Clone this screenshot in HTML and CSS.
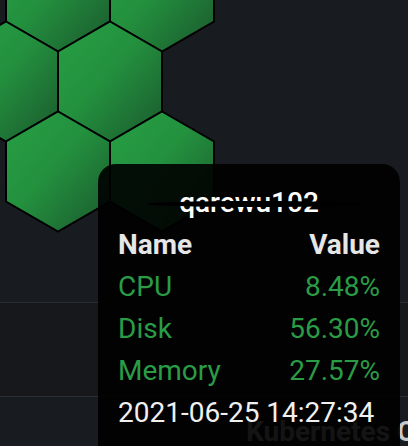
FILE: index.html
```html
<!DOCTYPE html>
<html>
<head>
<meta charset="utf-8">
<link rel="stylesheet" href="styles.css">
</head>
<body>
<div class="page">
  <div class="panel-top">
    <svg class="hexes" width="408" height="240" viewBox="0 0 408 240">
      <defs>
        <linearGradient id="g" x1="0.1" y1="0.1" x2="0.9" y2="0.9">
          <stop offset="0" stop-color="#269c43"/>
          <stop offset="0.45" stop-color="#23903e"/>
          <stop offset="1" stop-color="#1c6230"/>
        </linearGradient>
      </defs>
      <g fill="url(#g)" stroke="#000" stroke-width="2">
        <polygon points="58,-68.5 110,-38.5 110,21.5 58,51.5 6,21.5 6,-38.5"/>
        <polygon points="162,-68.5 214,-38.5 214,21.5 162,51.5 110,21.5 110,-38.5"/>
        <polygon points="6,21.5 58,51.5 58,111.5 6,141.5 -46,111.5 -46,51.5"/>
        <polygon points="110,21.5 162,51.5 162,111.5 110,141.5 58,111.5 58,51.5"/>
        <polygon points="58,111.5 110,141.5 110,201.5 58,231.5 6,201.5 6,141.5"/>
        <polygon points="162,111.5 214,141.5 214,201.5 162,231.5 110,201.5 110,141.5"/>
      </g>
    </svg>
  </div>
  <div class="panel-mid"></div>
  <div class="panel-bottom">
    <span class="panel-title">Kubernetes Cluster</span>
  </div>

  <div class="tooltip">
    <div class="tt-title">qarewu102<span class="smear"></span></div>
    <div class="tt-grid">
      <span class="th">Name</span><span class="th right">Value</span>
      <span class="metric">CPU</span><span class="metric right">8.48%</span>
      <span class="metric">Disk</span><span class="metric right">56.30%</span>
      <span class="metric">Memory</span><span class="metric right">27.57%</span>
      <span class="stamp">2021-06-25 14:27:34</span>
    </div>
  </div>
</div>
</body>
</html>
```
FILE: styles.css
```css
html, body {
  margin: 0;
  padding: 0;
  background: #181b1f;
  overflow: hidden;
}
.page {
  position: relative;
  width: 408px;
  height: 446px;
  overflow: hidden;
  font-family: Roboto, "Liberation Sans", sans-serif;
}
.panel-top {
  height: 302px;
  background: #181b1f;
}
.hexes {
  display: block;
}
.panel-mid {
  height: 93px;
  border-top: 1px solid #2a2d31;
  border-bottom: 1px solid #2a2d31;
  background: #16181c;
}
.panel-bottom {
  height: 60px;
  padding-left: 246px;
  white-space: nowrap;
}
.panel-title {
  display: block;
  font-size: 28px;
  font-weight: 700;
  line-height: 42px;
  color: #c7c8ca;
  margin-top: 14px;
}
.tooltip {
  position: absolute;
  left: 98px;
  top: 164px;
  width: 262px;
  height: 300px;
  padding: 18px 20px 0 20px;
  background: rgba(0, 0, 0, 0.9);
  border-radius: 18px;
  color: #e8e8e8;
  font-size: 28px;
  line-height: 42px;
}
.tt-title {
  position: relative;
  text-align: center;
  color: #ffffff;
  font-weight: 500;
}
.smear {
  position: absolute;
  left: 28px;
  top: 19px;
  width: 218px;
  height: 6px;
  background: #000;
  border-radius: 50%;
}
.tt-grid {
  display: grid;
  grid-template-columns: 1fr auto;
}
.th {
  font-weight: 700;
  color: #e6e6e6;
}
.right {
  text-align: right;
}
.metric {
  color: #2a9c46;
}
.stamp {
  grid-column: 1 / 3;
  color: #f0f0f0;
}
```
